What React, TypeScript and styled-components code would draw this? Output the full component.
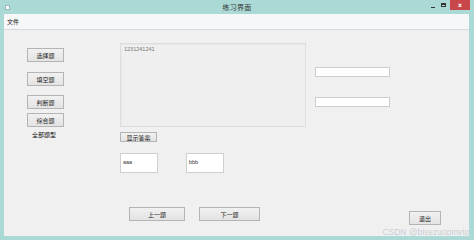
import React from 'react';
import styled, { createGlobalStyle } from 'styled-components';

// ========== Global ==========

const GlobalStyle = createGlobalStyle`
  html, body {
    margin: 0;
    padding: 0;
    width: 474px;
    height: 240px;
    overflow: hidden;
    background: #a9d8d6;
  }
  * { box-sizing: border-box; }
`;

const FONT = `"Noto Sans CJK SC", "Liberation Sans", sans-serif`;

// ========== Window chrome ==========

const Window = styled.div`
  position: relative;
  width: 474px;
  height: 240px;
  display: flex;
  flex-direction: column;
  background: #aad9d6;
  font-family: ${FONT};
`;

const TitleBar = styled.div`
  height: 14px;
  display: grid;
  grid-template-columns: 1fr auto 1fr;
  align-items: center;
`;

const WinIcon = styled.div`
  margin-left: 5px;
  width: 5px;
  height: 5px;
  background: #fdfdfd;
  border: 1px solid #9bb;
`;

const Title = styled.div`
  font-size: 7px;
  color: #333;
  letter-spacing: 0.2px;
`;

const Controls = styled.div`
  display: flex;
  justify-content: flex-end;
  align-items: flex-start;
  height: 14px;
  margin-right: 4px;
`;

const MinBtn = styled.div`
  width: 4px;
  height: 1px;
  background: #333;
  margin-top: 7px;
  margin-right: 6px;
`;

const MaxBtn = styled.div`
  width: 5px;
  height: 4px;
  border: 1px solid #333;
  border-top-width: 2px;
  margin-top: 3px;
  margin-right: 4px;
`;

const CloseBtn = styled.div`
  width: 20px;
  height: 10px;
  background: #c9474a;
  color: #fff;
  font-size: 6px;
  line-height: 10px;
  text-align: center;
  font-family: "DejaVu Sans", sans-serif;
  font-weight: bold;
`;

const Client = styled.div`
  flex: 1;
  margin: 0 5px 4px 4px;
  background: #f0f0f0;
  display: flex;
  flex-direction: column;
`;

const MenuBar = styled.div`
  height: 16px;
  padding-left: 3px;
  display: flex;
  align-items: center;
  background: #f6f7f8;
  border-bottom: 1px solid #d9dadb;
  font-size: 6px;
  color: #111;
`;

// ========== Form parts ==========

const Body = styled.div`
  flex: 1;
  display: flex;
  flex-direction: column;
`;

const TopArea = styled.div`
  display: flex;
  align-items: flex-start;
`;

const LeftPanel = styled.div`
  width: 116px;
  padding: 18px 0 0 23px;
  display: flex;
  flex-direction: column;
  align-items: flex-start;
`;

const ToolButton = styled.div<{ $w: number; $h: number; $mt?: number; $ml?: number }>`
  width: ${(p) => p.$w}px;
  height: ${(p) => p.$h}px;
  margin-top: ${(p) => p.$mt ?? 0}px;
  margin-left: ${(p) => p.$ml ?? 0}px;
  display: flex;
  align-items: center;
  justify-content: center;
  background: linear-gradient(#f1f1f1, #e3e3e3);
  border: 1px solid #b4b4b4;
  font-size: 6px;
  color: #222;
  flex-shrink: 0;
`;

const Label = styled.div`
  margin: 3px 0 0 5px;
  font-size: 6px;
  color: #111;
`;

const Center = styled.div`
  width: 186px;
  padding-top: 13px;
  display: flex;
  flex-direction: column;
  align-items: flex-start;
`;

const TextArea = styled.div`
  width: 186px;
  height: 84px;
  border: 1px solid #dedede;
  box-shadow: inset 1px 1px 0 #e8e8e8;
  background: #efefef;
  padding: 2px 3px;
  font-size: 5.5px;
  color: #777;
  font-family: "Liberation Sans", sans-serif;
`;

const BoxRow = styled.div`
  margin-top: 11px;
  display: flex;
  gap: 28px;
`;

const Box = styled.div`
  width: 38px;
  height: 20px;
  background: #fff;
  border: 1px solid #cfcfcf;
  padding: 5px 2px;
  font-size: 5.5px;
  color: #333;
  font-family: "Liberation Sans", sans-serif;
`;

const RightPanel = styled.div`
  margin-left: 9px;
  padding-top: 37px;
  display: flex;
  flex-direction: column;
  gap: 20px;
`;

const Field = styled.div`
  width: 75px;
  height: 10px;
  background: #fff;
  border: 1px solid #cdcdcd;
`;

const BottomRow = styled.div`
  margin-top: 34px;
  padding-left: 125px;
  padding-right: 28px;
  display: flex;
  align-items: flex-start;
`;

const Spacer = styled.div`
  flex: 1;
`;

const Watermark = styled.div`
  position: absolute;
  right: 5px;
  bottom: 3px;
  font-family: "Liberation Sans", sans-serif;
  font-size: 8.5px;
  color: #c4c9ce;
  text-shadow: 0 0 1px #ffffff;
  white-space: nowrap;
`;

// ========== Page ==========

export default function App() {
  return (
    <Window>
      <GlobalStyle />
      <TitleBar>
        <WinIcon />
        <Title>练习界面</Title>
        <Controls>
          <MinBtn />
          <MaxBtn />
          <CloseBtn>x</CloseBtn>
        </Controls>
      </TitleBar>
      <Client>
        <MenuBar>文件</MenuBar>
        <Body>
          <TopArea>
            <LeftPanel>
              <ToolButton $w={37} $h={14}>选择题</ToolButton>
              <ToolButton $w={37} $h={14} $mt={10}>填空题</ToolButton>
              <ToolButton $w={37} $h={14} $mt={9}>判断题</ToolButton>
              <ToolButton $w={37} $h={14} $mt={4}>综合题</ToolButton>
              <Label>全部题型</Label>
            </LeftPanel>
            <Center>
              <TextArea>1231241241</TextArea>
              <ToolButton $w={37} $h={10} $mt={5}>显示答案</ToolButton>
              <BoxRow>
                <Box>aaa</Box>
                <Box>bbb</Box>
              </BoxRow>
            </Center>
            <RightPanel>
              <Field />
              <Field />
            </RightPanel>
          </TopArea>
          <BottomRow>
            <ToolButton $w={56} $h={14}>上一题</ToolButton>
            <ToolButton $w={61} $h={14} $ml={14}>下一题</ToolButton>
            <Spacer />
            <ToolButton $w={32} $h={14} $mt={4}>退出</ToolButton>
          </BottomRow>
        </Body>
      </Client>
      <Watermark>CSDN @biyezuopinvip</Watermark>
    </Window>
  );
}
